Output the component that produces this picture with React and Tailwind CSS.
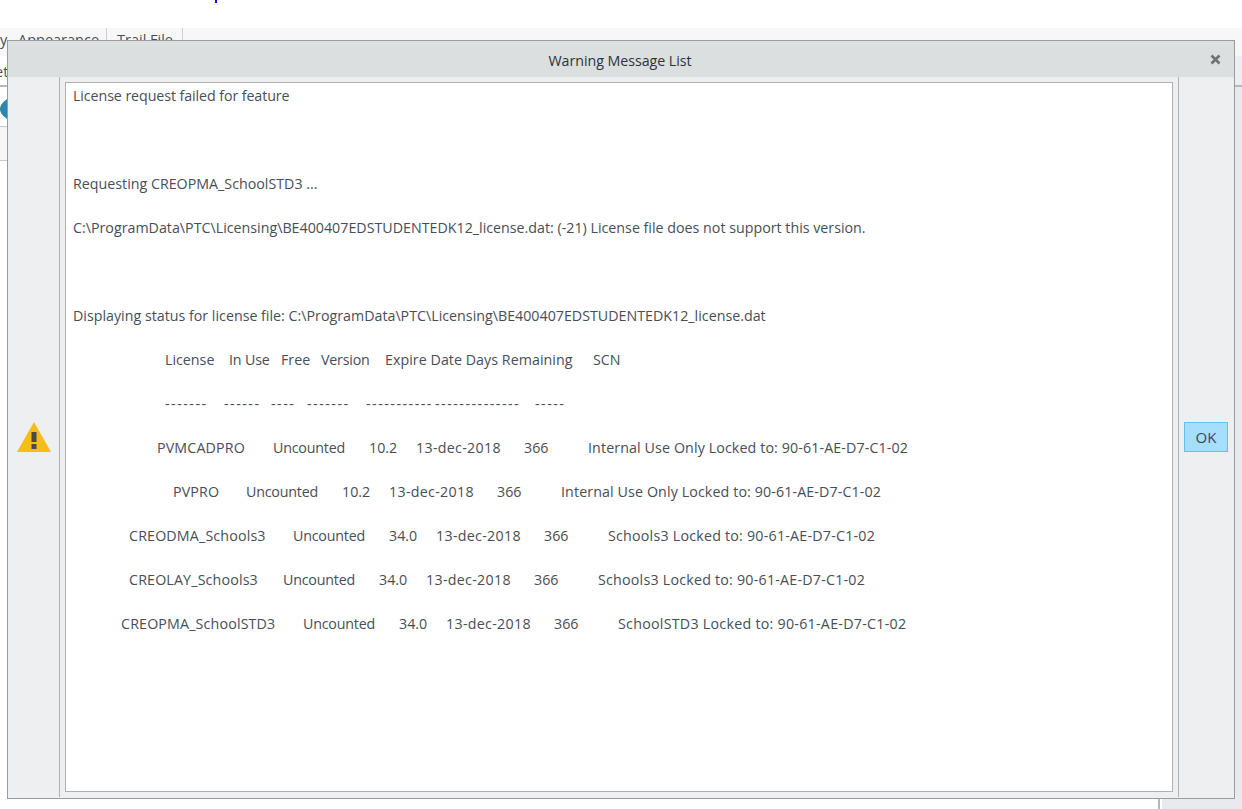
const rows = [
  { name: "PVMCADPRO", start: "ml-[84px] w-[116px]", version: "10.2", tail: "Internal Use Only Locked to: 90-61-AE-D7-C1-02", fit: "tracking-[0.11px]" },
  { name: "PVPRO", start: "ml-[100px] w-[73px]", version: "10.2", tail: "Internal Use Only Locked to: 90-61-AE-D7-C1-02", fit: "tracking-[0.11px]" },
  { name: "CREODMA_Schools3", start: "ml-[56px] w-[164px]", version: "34.0", tail: "Schools3 Locked to: 90-61-AE-D7-C1-02", fit: "tracking-[0.22px]" },
  { name: "CREOLAY_Schools3", start: "ml-[56px] w-[154px]", version: "34.0", tail: "Schools3 Locked to: 90-61-AE-D7-C1-02", fit: "tracking-[0.22px]" },
  { name: "CREOPMA_SchoolSTD3", start: "ml-[48px] w-[182px]", version: "34.0", tail: "SchoolSTD3 Locked to: 90-61-AE-D7-C1-02", fit: "tracking-[0.26px]" },
];

function Cell({ className, children }) {
  return <span className={`inline-block whitespace-pre ${className}`}>{children}</span>;
}

function Line({ children, className = "" }) {
  return <div className={`h-[44px] leading-[26px] whitespace-nowrap ${className}`}>{children}</div>;
}

export default function App() {
  return (
    <div className="relative flex h-[809px] w-[1242px] flex-col overflow-hidden bg-white font-['Open_Sans','Noto_Sans',sans-serif] text-[14.25px] text-[#484e57]">
      <div className="h-[28px] shrink-0 bg-white">
        <div className="ml-[215px] h-[3px] w-[2px] bg-[#1010e0]"></div>
      </div>
      <div className="flex h-[28px] shrink-0 items-start bg-[#f7f7f7] text-[14.5px] leading-[24px]">
        <span className="w-[18px]">y</span>
        <span className="h-[28px] w-[89px] border-r border-[#cfcfcf]">Appearance</span>
        <span className="h-[28px] w-[76px] border-r border-[#cfcfcf] pl-[10px]">Trail File</span>
      </div>
      <div className="flex h-[31px] shrink-0 justify-between border-b-2 border-[#b8b8b8] text-[14.5px] leading-[28px]">
        <span className="ml-[-5px] mt-[2px]">et</span>
        <div className="h-full w-[7px] bg-[#eceef1]"></div>
      </div>
      <div className="flex min-h-0 flex-1">
        <div className="min-w-0 flex-1">
          <div className="flex h-[40px] items-center border-b border-[#c8c8c8] bg-white">
            <svg width="7" height="20" viewBox="0 0 7 20" className="mt-[4px]">
              <path d="M7 0 C3 3 0 6 0 10 C0 14 3 17 7 20 Z" fill="#2d86ad" />
            </svg>
          </div>
          <div className="h-[34px] border-b border-[#c8c8c8] bg-[#f5f5f5]"></div>
        </div>
        <div className="flex w-[84px] shrink-0 border-l-[2px] border-[#b5b5b5] bg-white pl-[2px]">
          <div className="flex-1 bg-[#e9eaee]"></div>
        </div>
      </div>

      <div className="absolute left-[7px] top-[40px] flex h-[759px] w-[1228px] flex-col border border-[#9b9b9b] bg-[#eeeff1]">
        <div className="relative flex h-[36px] shrink-0 items-center justify-center bg-[#dcdfe0] pr-[2px] pt-[4px] text-[#2f3338]">
          <span className="tracking-[-0.05px]">Warning Message List</span>
          <svg className="absolute right-[13px] top-[13px]" width="11" height="11" viewBox="0 0 11 11">
            <path d="M1.5 1.5 L9.5 9.5 M9.5 1.5 L1.5 9.5" stroke="#6e7176" strokeWidth="2.6" fill="none" />
          </svg>
        </div>
        <div className="flex min-h-0 flex-1">
          <div className="mb-[1px] flex w-[52px] shrink-0 items-center justify-center border-r border-[#b1b1b1]">
            <svg width="36" height="32" viewBox="0 0 36 32" className="mb-[1px]">
              <path d="M18 1 L35 31 L1 31 Z" fill="#f5bd16" />
              <rect x="15.5" y="11" width="5" height="10" fill="#4a4a4e" />
              <rect x="15.5" y="23" width="5" height="5" fill="#4a4a4e" />
            </svg>
          </div>
          <div className="mx-[5px] mb-[6px] mt-[5px] min-w-0 flex-1 border border-[#b0b0b0] bg-white pl-[7px]">
            <Line className="tracking-[-0.09px]">License request failed for feature</Line>
            <Line></Line>
            <Line>Requesting CREOPMA_SchoolSTD3 ...</Line>
            <Line>C:\ProgramData\PTC\Licensing\BE400407EDSTUDENTEDK12_license.dat: (-21) License file does not support this version.</Line>
            <Line></Line>
            <Line>Displaying status for license file: C:\ProgramData\PTC\Licensing\BE400407EDSTUDENTEDK12_license.dat</Line>
            <Line>
              <Cell className="ml-[92px] w-[64px]">License</Cell>
              <Cell className="w-[52px] tracking-[-0.15px]">In Use</Cell>
              <Cell className="w-[40px]">Free</Cell>
              <Cell className="w-[64px] tracking-[-0.2px]">Version</Cell>
              <Cell className="w-[208px] tracking-[0.04px]">Expire Date Days Remaining</Cell>
              <Cell>SCN</Cell>
            </Line>
            <Line>
              <Cell className="ml-[92px] w-[59px] tracking-[1.5px]">-------</Cell>
              <Cell className="w-[47px] tracking-[1.5px]">------</Cell>
              <Cell className="w-[36px] tracking-[1.5px]">----</Cell>
              <Cell className="w-[59px] tracking-[1.5px]">-------</Cell>
              <Cell className="w-[69px] tracking-[1.5px]">-----------</Cell>
              <Cell className="w-[100px] tracking-[1.5px]">--------------</Cell>
              <Cell className="tracking-[1.5px]">-----</Cell>
            </Line>
            {rows.map((row) => (
              <Line key={row.name}>
                <Cell className={`tracking-[0.15px] ${row.start}`}>{row.name}</Cell>
                <Cell className="w-[96px] tracking-[-0.2px]">Uncounted</Cell>
                <Cell className="w-[47px]">{row.version}</Cell>
                <Cell className="w-[108px] tracking-[0.3px]">13-dec-2018</Cell>
                <Cell className="w-[64px]">366</Cell>
                <Cell className={row.fit}>{row.tail}</Cell>
              </Line>
            ))}
          </div>
          <div className="mb-[1px] flex w-[56px] shrink-0 items-center border-l border-[#b1b1b1] pl-[5px]">
            <button className="h-[30px] w-[44px] border border-[#5ec4f5] bg-[#a6dffd] text-[15px] text-[#3d4650]">OK</button>
          </div>
        </div>
      </div>
    </div>
  );
}
